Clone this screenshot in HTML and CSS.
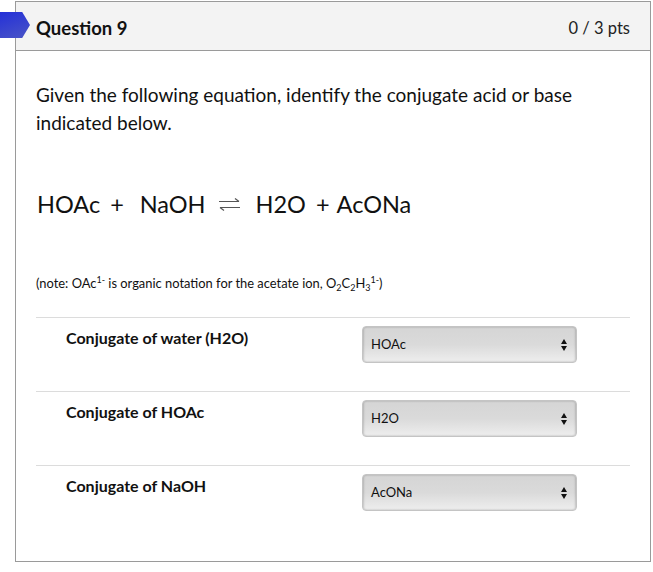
FILE: index.html
```html
<!DOCTYPE html>
<html lang="en">
<head>
    <meta charset="UTF-8">
    <title>Question 9</title>
    <link rel="stylesheet" href="styles.css">
</head>
<body>
    <div class="badge"></div>
    <div class="question">
        <div class="header">
            <span class="title">Question 9</span>
            <span class="points">0 / 3 pts</span>
        </div>
        <div class="content">
            <p class="prompt">Given the following equation, identify the conjugate acid or base indicated below.</p>
            <div class="equation">
                <span>HOAc</span>
                <span class="plus">+</span>
                <span class="after-plus">NaOH</span>
                <svg class="arrows" width="23" height="14" viewBox="0 0 23 14"><path d="M1 4.5H21M17 1.5L21 4.5M2 10.5H22M2 10.5L6 13.5" stroke="#555" stroke-width="1.2" fill="none"/></svg>
                <span class="after-arrow">H2O</span>
                <span class="plus">+</span>
                <span class="last">AcONa</span>
            </div>
            <p class="note">(note: OAc<sup>1-</sup> is organic notation for the acetate ion, O<sub>2</sub>C<sub>2</sub>H<sub>3</sub><sup>1-</sup>)</p>

            <div class="answers">
                <div class="row">
                    <div class="label">Conjugate of water (H2O)</div>
                    <div class="select">HOAc<span class="caret"></span></div>
                </div>
                <div class="row">
                    <div class="label">Conjugate of HOAc</div>
                    <div class="select">H2O<span class="caret"></span></div>
                </div>
                <div class="row">
                    <div class="label">Conjugate of NaOH</div>
                    <div class="select">AcONa<span class="caret"></span></div>
                </div>
            </div>
        </div>
    </div>
</body>
</html>
```

FILE: styles.css
```css
body {
    margin: 0;
    padding: 0;
    background-color: #fff;
    color: #111;
    font-family: Lato, "Open Sans", sans-serif;
}

.badge {
    position: absolute;
    top: 12px;
    left: 0;
    width: 30px;
    height: 26px;
    background: linear-gradient(160deg, #2430d8, #4a55c6);
    clip-path: polygon(0 0, 74% 0, 100% 50%, 74% 100%, 0 100%);
}

.question {
    margin: 1px 0 0 15px;
    width: 636px;
    height: 561px;
    border: 1px solid #9a9a9a;
    box-sizing: border-box;
}

.header {
    display: flex;
    justify-content: space-between;
    align-items: center;
    height: 49px;
    padding: 3px 20px 0;
    background-color: #f3f3f3;
    border-bottom: 1px solid #9a9a9a;
    box-sizing: border-box;
    font-size: 18.5px;
    font-weight: bold;
}

.points {
    font-weight: normal;
    font-size: 16.5px;
    color: #222;
}

.content {
    padding: 0 20px;
}

.prompt {
    margin: 30px 0 0;
    font-size: 19px;
    line-height: 28px;
}

.equation {
    display: flex;
    align-items: center;
    margin: 53px 0 0 1px;
    height: 28px;
    font-size: 23.5px;
}

.plus {
    margin-left: 10px;
}

.after-plus {
    margin-left: 16px;
}

.arrows {
    margin-left: 12px;
}

.after-arrow {
    margin-left: 15px;
}

.last {
    margin-left: 7px;
}

.note {
    margin: 57px 0 0;
    font-size: 12.9px;
    line-height: 16px;
}

.note sup,
.note sub {
    font-size: 9px;
    line-height: 0;
}

.note sub {
    vertical-align: -3px;
}

.answers {
    margin-top: 26px;
}

.row {
    display: flex;
    align-items: flex-start;
    height: 74px;
    border-top: 1px solid #dcdcdc;
    padding-left: 30px;
    box-sizing: border-box;
}

.label {
    width: 296px;
    margin-top: 10px;
    font-size: 16px;
    font-weight: bold;
}

.select {
    position: relative;
    width: 215px;
    height: 37px;
    margin-top: 8px;
    padding-left: 8px;
    box-sizing: border-box;
    border: 1px solid #c4c4c4;
    border-radius: 4px;
    background: linear-gradient(#d5d5d5, #dadada 50%, #eeeeee);
    box-shadow: inset 1px 0 2px rgba(0, 0, 0, 0.15), inset -1px 0 2px rgba(0, 0, 0, 0.15);
    font-size: 13px;
    line-height: 35px;
}

.caret::before,
.caret::after {
    content: "";
    position: absolute;
    right: 9px;
    border-left: 3px solid transparent;
    border-right: 3px solid transparent;
}

.caret::before {
    top: 12px;
    border-bottom: 5px solid #111;
}

.caret::after {
    top: 19px;
    border-top: 5px solid #111;
}
```
